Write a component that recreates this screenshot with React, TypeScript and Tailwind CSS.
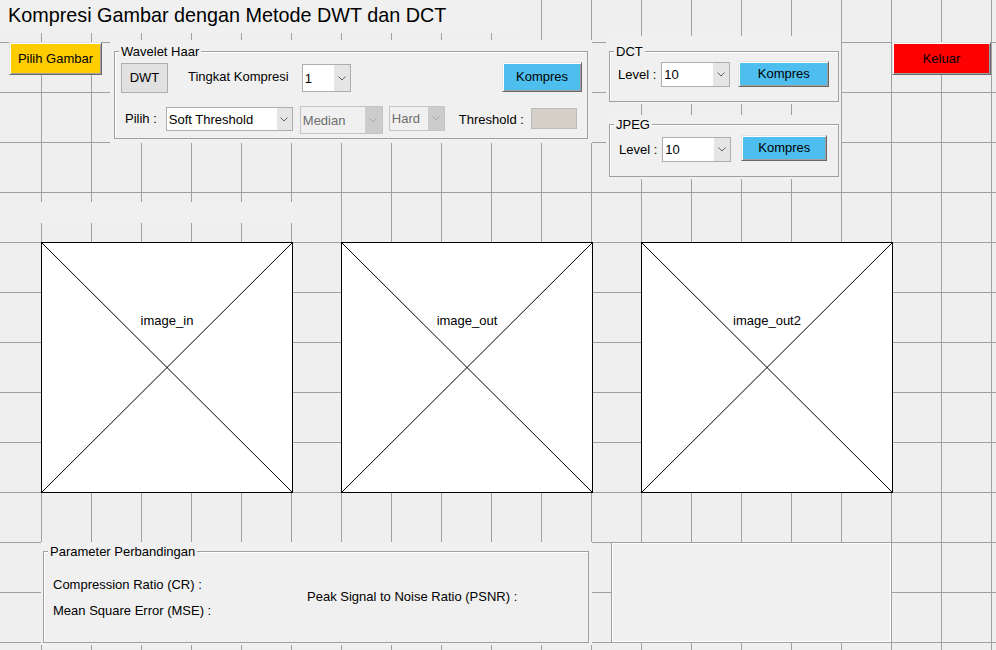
import type { ReactNode } from 'react';

// GUIDE-style layout canvas: grey grid with uicontrols placed on it

const font = "font-['Liberation_Sans',Arial,sans-serif]";

function Chevron({ muted = false }: { muted?: boolean }) {
  return (
    <svg width="8" height="5" viewBox="0 0 8 5" className="block">
      <polyline
        points="0.5,0.5 4,4 7.5,0.5"
        fill="none"
        stroke={muted ? '#a8a8a8' : '#606060'}
        strokeWidth="1"
      />
    </svg>
  );
}

function Combo({ value, className, arrow, disabled = false }: { value: string; className: string; arrow: string; disabled?: boolean }) {
  return (
    <div
      className={`flex shrink-0 border text-[13px] leading-none ${
        disabled ? 'border-[#c4c4c4] bg-[#f0f0f0] text-[#6d6d6d]' : 'border-[#adadad] bg-white text-black'
      } ${className}`}
    >
      <div className="flex flex-1 items-center pl-[2px]">{value}</div>
      <div className={`flex items-center justify-center ${disabled ? 'bg-[#cccccc]' : 'bg-[#e5e5e5]'} ${arrow}`}>
        <Chevron muted={disabled} />
      </div>
    </div>
  );
}

function PushButton({ label, className }: { label: string; className: string }) {
  return (
    <div
      className={`flex shrink-0 items-center justify-center border border-t-[#e3e3e3] border-l-[#e3e3e3] border-r-[#696969] border-b-[#696969] shadow-[inset_1px_1px_0_#ffffff,inset_-1px_-1px_0_#a0a0a0] text-[13px] text-black ${className}`}
    >
      {label}
    </div>
  );
}

function Label({ children, className = '' }: { children: ReactNode; className?: string }) {
  return <div className={`shrink-0 whitespace-nowrap bg-[#f0f0f0] text-[13px] leading-[15px] text-black ${className}`}>{children}</div>;
}

// etched uipanel border with its title sitting on the top edge
function Frame({ title, className, children }: { title?: string; className: string; children?: ReactNode }) {
  return (
    <div className={`relative border border-[#a0a0a0] shadow-[inset_1px_1px_0_#ffffff] ${className}`}>
      {title && (
        <span className="absolute left-[4px] top-[-8px] bg-[#f0f0f0] px-[2px] text-[13px] leading-[15px] text-black">{title}</span>
      )}
      {children}
    </div>
  );
}

function Axes({ name }: { name: string }) {
  return (
    <div className="relative h-[251px] w-[252px] shrink-0 border border-black bg-white">
      <svg className="absolute inset-0 h-full w-full" preserveAspectRatio="none" viewBox="0 0 250 249">
        <line x1="0" y1="0" x2="250" y2="249" stroke="#000" strokeWidth="1" />
        <line x1="250" y1="0" x2="0" y2="249" stroke="#000" strokeWidth="1" />
      </svg>
      <div className="relative pt-[70px] text-center text-[13px] leading-[15px] text-black">{name}</div>
    </div>
  );
}

export default function App() {
  return (
    <div
      className={`flex h-[650px] w-[996px] flex-col overflow-hidden bg-[#efefef] bg-[linear-gradient(to_right,#a0a0a0_1px,transparent_1px),linear-gradient(to_bottom,#a0a0a0_1px,transparent_1px)] bg-[size:50px_50px] bg-[position:41px_42px] ${font}`}
    >
      {/* title */}
      <div className="h-[33px] w-[520px] shrink-0 bg-[#f0f0f0] pl-[8px] text-[19.8px] leading-[30px] text-black">
        Kompresi Gambar dengan Metode DWT dan DCT
      </div>

      {/* controls */}
      <div className="flex h-[169px] shrink-0 items-start">
        <PushButton label="Pilih Gambar" className="ml-[9px] mt-[9px] h-[33px] w-[93px] bg-[#ffcc00]" />

        {/* Wavelet Haar */}
        <div className="ml-[8px] mt-[7px] h-[103px] w-[482px] shrink-0 bg-[#f0f0f0] pl-[4px] pt-[11px]">
          <Frame title="Wavelet Haar" className="h-[88px] w-[474px] pl-[6px] pr-[5px] pt-[10px]">
            <div className="flex items-start">
              <div className="mt-[1px] flex h-[30px] w-[47px] shrink-0 items-center justify-center border border-[#adadad] bg-[#e1e1e1] text-[13px]">
                DWT
              </div>
              <Label className="ml-[20px] mt-[7px]">Tingkat Kompresi</Label>
              <Combo value="1" className="ml-[13px] mt-[2px] h-[28px] w-[49px]" arrow="w-[16px]" />
              <PushButton label="Kompres" className="ml-auto h-[30px] w-[80px] bg-[#4dbeee]" />
            </div>
            <div className="mt-[13px] flex items-start pl-[4px]">
              <Label className="mt-[5px]">Pilih :</Label>
              <Combo value="Soft Threshold" className="ml-[9px] mt-[1px] h-[24px] w-[127px]" arrow="w-[15px]" />
              <Combo value="Median" disabled className="ml-[7px] h-[28px] w-[83px]" arrow="w-[17px]" />
              <Combo value="Hard" disabled className="ml-[6px] h-[25px] w-[56px]" arrow="w-[16px]" />
              <Label className="ml-[12px] mt-[6px] px-[2px]">Threshold :</Label>
              <div className="ml-[5px] mt-[2px] h-[21px] w-[46px] shrink-0 border border-[#bcbcbc] bg-[#d4d0c8]" />
            </div>
          </Frame>
        </div>

        {/* DCT / JPEG */}
        <div className="ml-[14px] mt-[3px] flex flex-col">
          <div className="h-[68px] w-[235px] bg-[#f0f0f0] pl-[3px] pt-[15px]">
            <Frame title="DCT" className="flex h-[51px] w-[230px] items-start pl-[8px] pt-[9px]">
              <Label className="mt-[6px]">Level :</Label>
              <Combo value="10" className="ml-[5px] mt-[1px] h-[25px] w-[69px]" arrow="w-[16px]" />
              <PushButton label="Kompres" className="ml-[8px] h-[26px] w-[91px] bg-[#4dbeee]" />
            </Frame>
          </div>
          <div className="mt-[11px] h-[64px] w-[235px] bg-[#f0f0f0] pl-[3px] pt-[9px]">
            <Frame title="JPEG" className="flex h-[53px] w-[230px] items-start pl-[9px] pt-[10px]">
              <Label className="mt-[7px]">Level :</Label>
              <Combo value="10" className="ml-[5px] mt-[2px] h-[25px] w-[69px]" arrow="w-[16px]" />
              <PushButton label="Kompres" className="ml-[10px] h-[26px] w-[86px] bg-[#4dbeee]" />
            </Frame>
          </div>
        </div>

        <PushButton label="Keluar" className="ml-[51px] mt-[9px] h-[33px] w-[99px] bg-[#ff0000]" />
      </div>

      {/* empty static text above the first axes */}
      <div className="ml-[41px] h-[21px] w-[252px] shrink-0 bg-[#f0f0f0]" />

      <div className="ml-[41px] mt-[19px] flex gap-[48px]">
        <Axes name="image_in" />
        <Axes name="image_out" />
        <Axes name="image_out2" />
      </div>

      <div className="mt-[49px] flex items-start">
        <div className="ml-[41px] h-[103px] w-[551px] shrink-0 bg-[#f0f0f0] pl-[2px] pt-[9px]">
          <Frame title="Parameter Perbandingan" className="flex h-[92px] w-[546px] items-start pl-[9px] pt-[25px]">
            <div className="flex flex-col gap-[11px]">
              <Label className="w-[193px]">Compression Ratio (CR) :</Label>
              <Label className="w-[205px]">Mean Square Error (MSE) :</Label>
            </div>
            <Label className="ml-[49px] mt-[12px] w-[260px]">Peak Signal to Noise Ratio (PSNR) :</Label>
          </Frame>
        </div>

        {/* blank panel */}
        <div className="ml-[19px] h-[101px] w-[281px] shrink-0 border border-[#a0a0a0] bg-[#f0f0f0] shadow-[inset_1px_1px_0_#ffffff,inset_-1px_-1px_0_#ffffff]" />
      </div>
    </div>
  );
}
